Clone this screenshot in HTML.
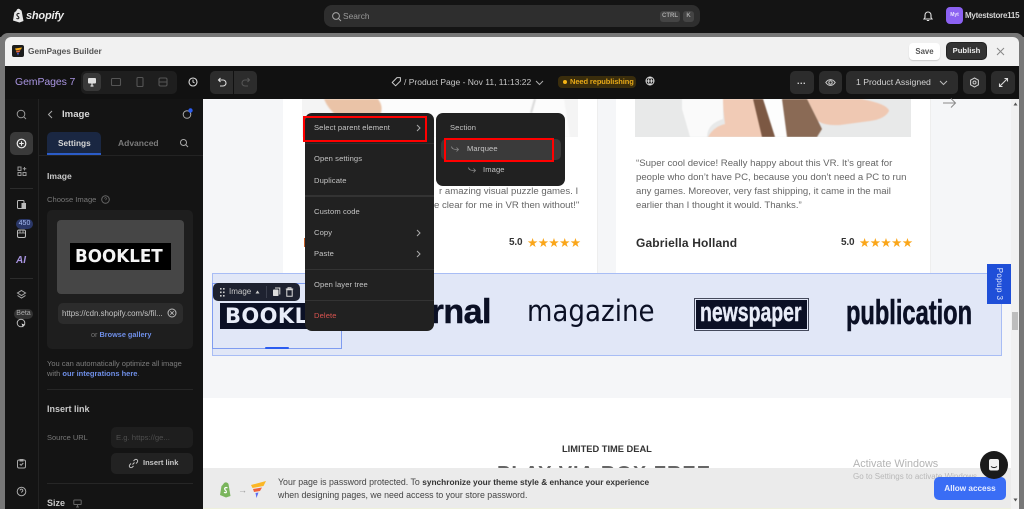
<!DOCTYPE html>
<html><head><meta charset="utf-8"><style>
*{box-sizing:border-box;margin:0;padding:0}
html,body{width:1024px;height:509px;overflow:hidden;background:#141414;font-family:"Liberation Sans",sans-serif}
.a{position:absolute}
.t{position:absolute;white-space:nowrap;line-height:1}
svg{position:absolute;overflow:visible}
.ib{position:absolute;background:#2c2c2c;border-radius:5px}
.m{position:absolute;left:314px;font-size:7.6px;color:#c4c4c4;white-space:nowrap;line-height:1;letter-spacing:.1px}
.q{position:absolute;font-size:9.6px;color:#666;white-space:nowrap;line-height:1}
.s{fill:none;stroke:#9a9a9a;stroke-width:1.1}
</style></head><body>
<div class="a" style="left:0;top:33px;width:1024px;height:476px;background:#777;border-radius:8px 8px 0 0"></div>
<div class="a" style="left:0;top:0;width:1024px;height:33px;background:#141414"></div>

<!-- shopify bar -->
<svg style="left:12px;top:8px" width="12" height="15" viewBox="0 0 12 15"><path d="M1 12.500 2.300 4.600C3 3.600 4 3.600 4.600 2.200 5.400.4 7 .4 8 1.500L9.600 2.800 11.500 13 7.500 14.500Z" fill="#e8e8e8"/><path d="M7.500 5.600C5.600 5 4.400 6.300 5.200 7.600 6 8.700 7.300 8.800 6.800 10.200 6.400 11 5.200 10.800 4.400 10.300" fill="none" stroke="#222" stroke-width="1.100"/></svg>
<div class="t" style="left:26px;top:10.500px;font-size:11px;font-weight:bold;font-style:italic;color:#ececec;letter-spacing:-.2px">shopify</div>
<div class="a" style="left:324px;top:5px;width:376px;height:22px;background:#2e2e2e;border-radius:8px"></div>
<svg style="left:331px;top:11px" width="11" height="11" viewBox="0 0 11 11"><circle cx="5" cy="5" r="3.400" fill="none" stroke="#a8a8a8" stroke-width="1"/><path d="M7.500 7.500 10 10" stroke="#a8a8a8" stroke-width="1"/></svg>
<div class="t" style="left:343px;top:12px;font-size:8.400px;color:#9a9a9a">Search</div>
<div class="a" style="left:660px;top:11px;width:20px;height:11px;background:#444;border-radius:3px;font-size:6px;color:#a8a8a8;text-align:center;line-height:11px;font-weight:bold">CTRL</div>
<div class="a" style="left:683px;top:11px;width:11px;height:11px;background:#444;border-radius:3px;font-size:6px;color:#a8a8a8;text-align:center;line-height:11px;font-weight:bold">K</div>
<svg style="left:922px;top:10px" width="12" height="12" viewBox="0 0 12 12"><path d="M2 9h8L9 7.500V5a3 3 0 0 0-6 0v2.500ZM4.800 10.500h2.400" fill="none" stroke="#e2e2e2" stroke-width="1.100"/></svg>
<div class="a" style="left:946px;top:7px;width:17px;height:17px;background:#8c62f2;border-radius:4px;color:#e9e0ff;font-size:5px;font-weight:bold;text-align:center;line-height:17px">Myt</div>
<div class="t" style="left:965px;top:12px;font-size:8px;color:#d4d4d4;font-weight:bold;letter-spacing:-.25px">Myteststore115</div>

<!-- window header -->
<div class="a" style="left:5px;top:37px;width:1014px;height:472px;background:#f1f1f1;border-radius:6px 6px 0 0"></div>
<div class="a" style="left:12px;top:45px;width:12px;height:12px;background:#1c1c1c;border-radius:2px"></div>
<svg style="left:14px;top:47px" width="9" height="9" viewBox="0 0 9 9"><path d="M1 1.500 8 .5 7 2.500 2 3.500Z" fill="#f7b01e"/><path d="M2 4 6.400 3.200 5.600 5 2.600 5.600Z" fill="#ef6a3a"/><path d="M3 6 5 5.800 4 8.500Z" fill="#5b6bf0"/></svg>
<div class="t" style="left:28px;top:47px;font-size:8.300px;font-weight:bold;color:#555">GemPages Builder</div>
<div class="a" style="left:909px;top:43px;width:31px;height:17px;background:#fff;border-radius:4px;box-shadow:0 1px 1px #ccc;font-size:7.800px;font-weight:bold;color:#555;text-align:center;line-height:17px">Save</div>
<div class="a" style="left:946px;top:42px;width:41px;height:18px;background:#333;border-radius:5px;border:1px solid #222;font-size:7.700px;font-weight:bold;color:#eee;text-align:center;line-height:16px">Publish</div>
<svg style="left:996px;top:47px" width="9" height="9" viewBox="0 0 9 9"><path d="M1 1 8 8M8 1 1 8" stroke="#888" stroke-width="1"/></svg>

<!-- toolbar -->
<div class="a" style="left:5px;top:66px;width:1014px;height:33px;background:#111"></div>
<div class="t" style="left:15px;top:77px;font-size:10.500px;color:#a894e0;letter-spacing:-.1px">GemPages 7</div>
<div class="a" style="left:81px;top:71px;width:96px;height:23px;background:#1e1e1e;border-radius:5px"></div>
<div class="a" style="left:83px;top:73px;width:18px;height:18px;background:#383838;border-radius:4px"></div>
<svg style="left:87px;top:77px" width="10" height="10" viewBox="0 0 10 10"><rect x="1" y="1" width="8" height="5.500" rx="1" fill="#e0e0e0"/><path d="M3.500 9h3M5 6.500V9" stroke="#e0e0e0" stroke-width="1.200"/></svg>
<svg style="left:111px;top:77px" width="10" height="10" viewBox="0 0 10 10"><rect x=".5" y="1.500" width="9" height="7" rx="1" class="s" style="stroke:#555"/></svg>
<svg style="left:135px;top:77px" width="10" height="10" viewBox="0 0 10 10"><rect x="2" y=".5" width="6" height="9" rx="1" class="s" style="stroke:#555"/></svg>
<svg style="left:158px;top:77px" width="10" height="10" viewBox="0 0 10 10"><rect x="1" y="1" width="8" height="8" rx="1.500" class="s" style="stroke:#555"/><path d="M1 5h8" stroke="#555"/></svg>
<svg style="left:188px;top:77px" width="10" height="10" viewBox="0 0 10 10"><circle cx="5" cy="5" r="4" fill="none" stroke="#ddd" stroke-width="1.100"/><path d="M5 2.600V5l1.600 1" fill="none" stroke="#ddd" stroke-width="1"/></svg>
<div class="a" style="left:210px;top:71px;width:23px;height:23px;background:#2c2c2c;border-radius:5px 0 0 5px"></div>
<div class="a" style="left:234px;top:71px;width:23px;height:23px;background:#2c2c2c;border-radius:0 5px 5px 0"></div>
<svg style="left:217px;top:77px" width="10" height="11" viewBox="0 0 10 11"><path d="M3.500 1 1.500 3l2 2M1.500 3H6a2.800 2.800 0 0 1 0 6H3" fill="none" stroke="#ddd" stroke-width="1.100"/></svg>
<svg style="left:241px;top:77px" width="10" height="11" viewBox="0 0 10 11"><path d="M6.500 1 8.500 3l-2 2M8.500 3H4a2.800 2.800 0 0 0 0 6h3" fill="none" stroke="#555" stroke-width="1.100"/></svg>
<svg style="left:391px;top:76px" width="11" height="11" viewBox="0 0 11 11"><path d="M1.200 6.500 6 1.600h3.400V5L4.600 9.800Z" fill="none" stroke="#ccc" stroke-width="1" stroke-linejoin="round"/></svg>
<div class="t" style="left:404px;top:77.500px;font-size:8.500px;color:#c6c6c6">/ Product Page - Nov 11, 11:13:22</div>
<svg style="left:535px;top:80px" width="9" height="6" viewBox="0 0 9 6"><path d="M1 1 4.500 4.500 8 1" fill="none" stroke="#aaa" stroke-width="1"/></svg>
<div class="a" style="left:558px;top:76px;width:78px;height:12px;background:#3a2d0c;border-radius:4px"></div>
<div class="a" style="left:563px;top:80px;width:4px;height:4px;background:#f5b414;border-radius:50%"></div>
<div class="t" style="left:570px;top:78px;font-size:7.500px;color:#e6a817;font-weight:bold;letter-spacing:-.1px">Need republishing</div>
<svg style="left:645px;top:76px" width="10" height="11" viewBox="0 0 10 11"><circle cx="5" cy="5" r="4" fill="none" stroke="#ddd" stroke-width="1"/><path d="M1 5h8M5 1c-2 2-2 6 0 8M5 1c2 2 2 6 0 8" fill="none" stroke="#ddd" stroke-width=".9"/></svg>
<div class="ib" style="left:790px;top:71px;width:24px;height:23px"></div>
<div class="t" style="left:797px;top:78px;font-size:9px;color:#ddd;letter-spacing:.5px;font-weight:bold;line-height:6px">...</div>
<div class="ib" style="left:819px;top:71px;width:23px;height:23px"></div>
<svg style="left:825px;top:77px" width="11" height="11" viewBox="0 0 11 11"><path d="M.8 5.500C3.500 1.600 7.500 1.600 10.200 5.500 7.500 9.400 3.500 9.400.8 5.500Z" fill="none" stroke="#ccc"/><circle cx="5.500" cy="5.500" r="1.700" fill="none" stroke="#ccc"/></svg>
<div class="ib" style="left:846px;top:71px;width:112px;height:23px"></div>
<div class="t" style="left:856px;top:78px;font-size:8.700px;color:#d2d2d2">1 Product Assigned</div>
<svg style="left:939px;top:80px" width="9" height="6" viewBox="0 0 9 6"><path d="M1 1 4.500 4.500 8 1" fill="none" stroke="#bbb" stroke-width="1"/></svg>
<div class="ib" style="left:963px;top:71px;width:23px;height:23px"></div>
<svg style="left:969px;top:77px" width="11" height="11" viewBox="0 0 11 11"><path d="M5.500 1 9.400 3.200V7.800L5.500 10 1.600 7.800V3.200Z" fill="none" stroke="#ccc" stroke-width="1.100"/><circle cx="5.500" cy="5.500" r="1.500" fill="none" stroke="#ccc"/></svg>
<div class="ib" style="left:991px;top:71px;width:24px;height:23px"></div>
<svg style="left:998px;top:77px" width="11" height="11" viewBox="0 0 11 11"><path d="M1.500 9.500 9.500 1.500M6.500 1.500h3v3M1.500 6.500v3h3" fill="none" stroke="#ddd" stroke-width="1.100"/></svg>

<!-- left rail + panel -->
<div class="a" style="left:5px;top:99px;width:198px;height:410px;background:#141414"></div>
<div class="a" style="left:38px;top:99px;width:1px;height:410px;background:#232323"></div>
<svg style="left:16px;top:109px" width="11" height="11" viewBox="0 0 11 11"><circle cx="5" cy="5" r="3.800" fill="none" stroke="#999"/><path d="M7.800 7.800 10 10" stroke="#999"/></svg>
<div class="a" style="left:10px;top:132px;width:23px;height:23px;background:#3a3a3a;border-radius:5px"></div>
<svg style="left:16px;top:138px" width="11" height="11" viewBox="0 0 11 11"><circle cx="5.500" cy="5.500" r="4.300" fill="none" stroke="#eee" stroke-width="1.200"/><path d="M5.500 3.200v4.600M3.200 5.500h4.600" stroke="#eee" stroke-width="1.100"/></svg>
<svg style="left:17px;top:166px" width="10" height="11" viewBox="0 0 10 11"><g fill="none" stroke="#999"><rect x="1" y="1" width="3" height="3.500"/><rect x="1" y="6.500" width="3" height="3"/><rect x="6" y="6.500" width="3" height="3"/><path d="M7.500 1v3.500M5.800 2.800h3.500"/></g></svg>
<div class="a" style="left:10px;top:188px;width:23px;height:1px;background:#2c2c2c"></div>
<svg style="left:16px;top:199px" width="11" height="11" viewBox="0 0 11 11"><g fill="none" stroke="#bbb"><rect x="1.500" y="1.500" width="6.500" height="8" rx="1"/><rect x="6" y="4.500" width="3.500" height="5" fill="#bbb"/></g></svg>
<div class="a" style="left:16px;top:219px;width:17px;height:10px;background:#2a3767;border-radius:5px;color:#a8bdf5;font-size:7px;text-align:center;line-height:10px">450</div>
<svg style="left:16px;top:228px" width="11" height="11" viewBox="0 0 11 11"><rect x="1.500" y="2" width="8" height="7.500" rx="1.500" fill="none" stroke="#bbb"/><path d="M1.500 5h8M4 2v3M7 2v3" stroke="#bbb" stroke-width=".8"/></svg>
<div class="t" style="left:16px;top:256px;font-size:10px;font-weight:bold;color:#a894e0;font-style:italic">AI</div>
<div class="a" style="left:10px;top:278px;width:23px;height:1px;background:#2c2c2c"></div>
<svg style="left:16px;top:289px" width="11" height="11" viewBox="0 0 11 11"><path d="M5.500 1.500 9.500 4 5.500 6.500 1.500 4ZM1.500 6.500l4 2.500 4-2.500" fill="none" stroke="#aaa"/></svg>
<div class="a" style="left:14px;top:309px;width:19px;height:10px;background:#333;border-radius:5px;color:#aaa;font-size:7px;text-align:center;line-height:10px">Beta</div>
<svg style="left:16px;top:318px" width="11" height="11" viewBox="0 0 11 11"><circle cx="5" cy="5" r="3.800" fill="none" stroke="#bbb"/><path d="M5.500 5.500 9.500 7 7.500 7.500 7 9.500Z" fill="#ddd"/></svg>
<svg style="left:16px;top:458px" width="11" height="11" viewBox="0 0 11 11"><rect x="1.500" y="2" width="8" height="8" rx="1.500" fill="none" stroke="#aaa"/><path d="M4 1.500h3V3H4ZM3.800 6l1.300 1.300L7.300 5" fill="none" stroke="#aaa"/></svg>
<svg style="left:16px;top:486px" width="11" height="11" viewBox="0 0 11 11"><circle cx="5.500" cy="5.500" r="4.300" fill="none" stroke="#aaa"/><path d="M4.200 4.400a1.300 1.300 0 1 1 1.900 1.200c-.4.300-.6.500-.6 1" fill="none" stroke="#aaa"/></svg>

<svg style="left:47px;top:110px" width="6" height="9" viewBox="0 0 6 9"><path d="M5 1 1.500 4.500 5 8" fill="none" stroke="#aaa"/></svg>
<div class="t" style="left:62px;top:109.500px;font-size:9.600px;font-weight:bold;color:#d8d8d8">Image</div>
<svg style="left:182px;top:108px" width="11" height="12" viewBox="0 0 11 12"><circle cx="5" cy="6.500" r="3.800" fill="none" stroke="#aaa"/><circle cx="8.500" cy="2.500" r="2.200" fill="#2b5cf0"/></svg>
<div class="a" style="left:47px;top:132px;width:54px;height:23px;background:#1a2742;border-radius:5px 5px 0 0;border-bottom:2px solid #2b5cc8"></div>
<div class="t" style="left:58px;top:139px;font-size:8.300px;font-weight:bold;color:#d8d8d8">Settings</div>
<div class="t" style="left:118px;top:139px;font-size:8.500px;font-weight:bold;color:#7b7b7b">Advanced</div>
<svg style="left:179px;top:138px" width="10" height="10" viewBox="0 0 10 10"><circle cx="4.500" cy="4.500" r="3" fill="none" stroke="#aaa"/><path d="M6.800 6.800 9 9" stroke="#aaa"/></svg>
<div class="a" style="left:39px;top:155px;width:164px;height:1px;background:#232323"></div>
<div class="t" style="left:47px;top:171.500px;font-size:8.600px;font-weight:bold;color:#c8c8c8">Image</div>
<div class="t" style="left:47px;top:196px;font-size:7.600px;color:#777">Choose Image</div>
<svg style="left:101px;top:195px" width="9" height="9" viewBox="0 0 9 9"><circle cx="4.500" cy="4.500" r="3.800" fill="none" stroke="#666"/><path d="M3.500 3.600a1 1 0 1 1 1.500.9c-.3.200-.5.400-.5.800" fill="none" stroke="#666" stroke-width=".7"/></svg>
<div class="a" style="left:47px;top:210px;width:146px;height:139px;background:#1e1e1e;border-radius:5px"></div>
<div class="a" style="left:57px;top:220px;width:127px;height:74px;background:#464646;border-radius:4px"></div>
<div class="a" style="left:70px;top:243px;width:101px;height:27px;background:#000"></div>
<div class="t" style="left:75px;top:247.500px;font-size:18px;font-weight:bold;color:#f4f4f4;font-family:'DejaVu Sans',sans-serif;transform:scaleX(.93);transform-origin:left">BOOKLET</div>
<div class="a" style="left:58px;top:303px;width:125px;height:21px;background:#2c2c2c;border-radius:5px"></div>
<div class="t" style="left:62px;top:309.500px;font-size:7.900px;color:#c4c4c4">https://cdn.shopify.com/s/fil...</div>
<svg style="left:167px;top:308px" width="10" height="10" viewBox="0 0 10 10"><circle cx="5" cy="5" r="4" fill="none" stroke="#bbb"/><path d="M3.300 3.300l3.400 3.400M6.700 3.300 3.300 6.700" stroke="#bbb" stroke-width=".8"/></svg>
<div class="t" style="left:91px;top:330.500px;font-size:7.300px;color:#777">or <span style="color:#6f8fe8;font-weight:bold">Browse gallery</span></div>
<div class="t" style="left:47px;top:359.500px;font-size:7.500px;color:#7d7d7d">You can automatically optimize all image</div>
<div class="t" style="left:47px;top:369.500px;font-size:7.500px;color:#7d7d7d">with <span style="color:#6f8fe8;font-weight:bold">our integrations here</span>.</div>
<div class="a" style="left:47px;top:389px;width:146px;height:1px;background:#262626"></div>
<div class="t" style="left:47px;top:405px;font-size:9px;font-weight:bold;color:#c8c8c8">Insert link</div>
<div class="t" style="left:47px;top:434px;font-size:7.500px;color:#777">Source URL</div>
<div class="a" style="left:111px;top:427px;width:82px;height:21px;background:#1e1e1e;border-radius:5px"></div>
<div class="t" style="left:116px;top:434px;font-size:7.700px;color:#4e4e4e">E.g. https://ge...</div>
<div class="a" style="left:111px;top:453px;width:82px;height:21px;background:#222;border-radius:5px"></div>
<svg style="left:128px;top:458px" width="11" height="11" viewBox="0 0 11 11"><path d="M4.500 6.500 6.500 4.500M5.500 3l1.200-1.200a1.700 1.700 0 0 1 2.500 2.500L8 5.500M3 5.500 1.800 6.700a1.700 1.700 0 0 0 2.500 2.500L5.500 8" fill="none" stroke="#ccc" stroke-width=".9"/></svg>
<div class="t" style="left:143px;top:459px;font-size:7.500px;font-weight:bold;color:#c8c8c8">Insert link</div>
<div class="a" style="left:47px;top:483px;width:146px;height:1px;background:#262626"></div>
<div class="t" style="left:47px;top:498.500px;font-size:9px;font-weight:bold;color:#c8c8c8">Size</div>
<svg style="left:73px;top:499px" width="9" height="9" viewBox="0 0 9 9"><rect x=".8" y="1" width="7.400" height="4.500" rx=".8" fill="none" stroke="#666"/><path d="M3 8h3M4.500 5.500V8" stroke="#666"/></svg>

<!-- canvas -->
<div class="a" style="left:203px;top:99px;width:808px;height:410px;background:#f5f6f8"></div>
<div class="a" style="left:283px;top:99px;width:315px;height:174px;background:#fff;border-right:1px solid #eee"></div>
<div class="a" style="left:616px;top:99px;width:315px;height:174px;background:#fff;border-right:1px solid #eee"></div>
<div class="a" style="left:203px;top:398px;width:808px;height:111px;background:#fff"></div>

<!-- photos -->
<div class="a" style="left:302px;top:99px;width:276px;height:38px;background:#f4f4f4;overflow:hidden">
<svg style="left:0;top:0" width="276" height="38" viewBox="0 0 276 38"><g style="filter:blur(.8px)"><path d="M76 0H262L268 38H76Z" fill="#fcfcfc"/><path d="M22 0H76Q82 8 78 16 L36 18 Q26 10 22 0Z" fill="#eac3a7"/><path d="M233 0 229 14" stroke="#d8d8d8" stroke-width="2"/></g></svg>
</div>
<div class="a" style="left:635px;top:99px;width:276px;height:38px;background:#e8e9e9;overflow:hidden">
<svg style="left:0;top:0" width="276" height="38" viewBox="0 0 276 38"><g style="filter:blur(.6px)">
<path d="M47 0 88 0 88 20Q72 25 72 38L55 38Q50 20 47 10Z" fill="#fafafa"/>
<path d="M172 0 226 0Q253 5 254 12 250 20 235 22L205 26Q190 27 183 22Z" fill="#efc8b2"/>
<path d="M88 0 118 0 128 38 73 38Q78 28 90 25 88 10 88 0Z" fill="#f1cbb6"/>
<path d="M128 0 148 0 158 38 140 38Z" fill="#fdfdfd"/>
<path d="M118 0 128 0 140 38 127 38Z" fill="#7c5843"/>
<path d="M147 0 172 0 187 30 182 38 152 38Z" fill="#8a6a55"/>
</g></svg>
</div>
<svg style="left:943px;top:97px" width="14" height="12" viewBox="0 0 14 12"><path d="M0 6h12.500M8 1.500 12.500 6 8 10.500" fill="none" stroke="#8a8a8a" stroke-width="1"/></svg>

<!-- left card text -->
<div class="q" style="left:439px;top:187px">r amazing visual puzzle games. I</div>
<div class="q" style="left:434px;top:200.500px">e clear for me in VR then without!"</div>
<div class="a" style="left:304px;top:238px;width:1.500px;height:9px;background:#c9632c"></div>
<div class="t" style="left:509px;top:238px;font-size:10px;font-weight:bold;color:#333;letter-spacing:-.2px">5.0</div>
<div class="t" style="left:527px;top:237px;font-size:12.500px;color:#faa61a;letter-spacing:-.5px;font-family:'DejaVu Sans',sans-serif">★★★★★</div>

<!-- right card text -->
<div class="q" style="left:636px;top:158.500px">“Super cool device! Really happy about this VR. It’s great for</div>
<div class="q" style="left:636px;top:172.500px">people who don’t have PC, because you don’t need a PC to run</div>
<div class="q" style="left:636px;top:186.500px">any games. Moreover, very fast shipping, it came in the mail</div>
<div class="q" style="left:636px;top:200.500px">earlier than I thought it would. Thanks.”</div>
<div class="t" style="left:636px;top:237px;font-size:12px;font-weight:bold;color:#2e2e2e;letter-spacing:.15px">Gabriella Holland</div>
<div class="t" style="left:841px;top:238px;font-size:10px;font-weight:bold;color:#333;letter-spacing:-.2px">5.0</div>
<div class="t" style="left:859px;top:237px;font-size:12.500px;color:#faa61a;letter-spacing:-.5px;font-family:'DejaVu Sans',sans-serif">★★★★★</div>

<!-- banner -->
<div class="a" style="left:212px;top:273px;width:790px;height:83px;background:#e1e7f7;border:1px solid #a8bdf5"></div>
<div class="a" style="left:212px;top:283px;width:130px;height:66px;border:1px solid #7f9cf0"></div>
<div class="a" style="left:265px;top:347px;width:24px;height:2px;background:#2b5cf0;border-radius:1px"></div>
<div class="a" style="left:220px;top:303px;width:95px;height:26px;background:#0b1025"></div>
<div class="t" style="left:225px;top:306px;font-size:21px;font-weight:bold;color:#e8ecf8;font-family:'DejaVu Sans',sans-serif;letter-spacing:.4px">BOOKLET</div>
<div class="t" style="right:533px;top:295px;font-size:34px;font-weight:bold;color:#0b1025;letter-spacing:-.5px;-webkit-text-stroke:.5px #0b1025">journal</div>
<div class="t" style="left:527px;top:297px;font-size:29.500px;color:#0b1025;font-family:'DejaVu Sans',sans-serif;transform:scaleX(.885);transform-origin:left">magazine</div>
<div class="a" style="left:694px;top:298px;width:115px;height:33px;border:1px solid #44495c;padding:1px"><div style="width:100%;height:100%;background:#0b1025"></div></div>
<div class="t" style="left:700px;top:299px;font-size:27px;font-weight:bold;color:#e8ecf8;transform:scaleX(.72);transform-origin:left;-webkit-text-stroke:.4px #e8ecf8">newspaper</div>
<div class="t" style="left:846px;top:296px;font-size:34px;font-weight:bold;color:#0b1025;transform:scaleX(.695);transform-origin:left;-webkit-text-stroke:.6px #0b1025">publication</div>
<div class="a" style="left:987px;top:264px;width:24px;height:40px;background:#1f4fd8"></div>
<div class="t" style="left:999px;top:284px;font-size:8px;color:#dfe6fb;transform:translate(-50%,-50%) rotate(90deg);letter-spacing:.4px">Popup 3</div>

<!-- image toolbar -->
<div class="a" style="left:213px;top:283px;width:87px;height:18px;background:#1e2230;border-radius:5px"></div>
<svg style="left:219px;top:288px" width="7" height="9" viewBox="0 0 7 9"><g fill="#ccc"><rect width="1.600" height="1.600" x="1"/><rect width="1.600" height="1.600" x="4"/><rect width="1.600" height="1.600" x="1" y="3.500"/><rect width="1.600" height="1.600" x="4" y="3.500"/><rect width="1.600" height="1.600" x="1" y="7"/><rect width="1.600" height="1.600" x="4" y="7"/></g></svg>
<div class="t" style="left:229px;top:288px;font-size:8px;color:#c8c8c8">Image</div>
<svg style="left:255px;top:290px" width="5" height="4" viewBox="0 0 5 4"><path d="M.5 3.500 2.500.5l2 3Z" fill="#ccc"/></svg>
<div class="a" style="left:266px;top:286px;width:1px;height:12px;background:#3a3e4c"></div>
<svg style="left:272px;top:287px" width="9" height="10" viewBox="0 0 9 10"><rect x="1" y="2.500" width="5.500" height="6.500" rx=".8" fill="#ddd"/><path d="M3 1h4.800v6.500" fill="none" stroke="#ddd"/></svg>
<svg style="left:285px;top:287px" width="9" height="10" viewBox="0 0 9 10"><path d="M.8 2h7.400M3 2V.8h3V2M1.800 2.800h5.400V9.300H1.800Z" fill="none" stroke="#ddd"/></svg>

<!-- context menu -->
<div class="a" style="left:305px;top:113px;width:129px;height:218px;background:#212121;border-radius:7px"></div>
<div class="a" style="left:303px;top:116px;width:124px;height:26px;border:2.500px solid #f00"></div>
<div class="m" style="top:124.200px">Select parent element</div>
<svg style="left:416px;top:124px" width="5" height="8" viewBox="0 0 5 8"><path d="M1 1l3 3-3 3" fill="none" stroke="#aaa"/></svg>
<div class="a" style="left:305px;top:143px;width:129px;height:1px;background:#2e2e2e"></div>
<div class="m" style="top:155px">Open settings</div>
<div class="m" style="top:176.500px">Duplicate</div>
<div class="a" style="left:305px;top:195px;width:129px;height:1.500px;background:#333"></div>
<div class="m" style="top:207.500px">Custom code</div>
<div class="m" style="top:229px">Copy</div>
<svg style="left:416px;top:229px" width="5" height="8" viewBox="0 0 5 8"><path d="M1 1l3 3-3 3" fill="none" stroke="#aaa"/></svg>
<div class="m" style="top:249.500px">Paste</div>
<svg style="left:416px;top:250px" width="5" height="8" viewBox="0 0 5 8"><path d="M1 1l3 3-3 3" fill="none" stroke="#aaa"/></svg>
<div class="a" style="left:305px;top:269px;width:129px;height:1px;background:#333"></div>
<div class="m" style="top:281px">Open layer tree</div>
<div class="a" style="left:305px;top:300px;width:129px;height:1px;background:#333"></div>
<div class="m" style="top:312px;color:#d9534f">Delete</div>

<!-- submenu -->
<div class="a" style="left:436px;top:113px;width:129px;height:73px;background:#212121;border-radius:7px"></div>
<div class="a" style="left:441px;top:139px;width:120px;height:21px;background:#3a3a3a;border-radius:5px"></div>
<div class="a" style="left:444px;top:138px;width:110px;height:24px;border:2.500px solid #f00"></div>
<div class="m" style="left:450px;top:124px">Section</div>
<svg style="left:451px;top:146px" width="9" height="7" viewBox="0 0 9 7"><path d="M.5.500C1 3 2.500 3.500 7.500 3.500M5.500 1.500l2 2-2 2" fill="none" stroke="#888" stroke-width=".8"/></svg>
<div class="m" style="left:467px;top:145px">Marquee</div>
<svg style="left:468px;top:167px" width="9" height="7" viewBox="0 0 9 7"><path d="M.5.500C1 3 2.500 3.500 7.500 3.500M5.500 1.500l2 2-2 2" fill="none" stroke="#888" stroke-width=".8"/></svg>
<div class="m" style="left:483px;top:166px">Image</div>

<!-- lower -->
<div class="t" style="left:562px;top:445px;font-size:9.300px;font-weight:bold;color:#333">LIMITED TIME DEAL</div>
<div class="t" style="left:497px;top:464px;font-size:20px;font-weight:bold;color:#666;letter-spacing:1px">PLAY VIA BOX FREE</div>

<!-- password bar -->
<div class="a" style="left:203px;top:468px;width:808px;height:41px;background:#ebebeb"></div>
<div class="a" style="left:203px;top:507.500px;width:808px;height:1.500px;background:#eef0dc"></div>
<svg style="left:218px;top:481px" width="15" height="17" viewBox="0 0 15 17"><path d="M2 14 3.500 5C5 4 5.500 2 7 1.500c1.500-.5 3 .5 3.500 1.500L12.500 15 8 16.500Z" fill="#7ab55c"/><path d="M9.500 6.800C7.500 6 6 7.200 7 8.700c.8 1 1.800 1.200 1.400 2.500-.4.800-1.600.6-2.400.1" fill="none" stroke="#fff" stroke-width="1.200"/></svg>
<div class="t" style="left:238px;top:486px;font-size:9px;color:#999">→</div>
<svg style="left:250px;top:480px" width="17" height="19" viewBox="0 0 17 19"><path d="M1 5 16 1 13.500 6 2.500 8Z" fill="#fbb726"/><path d="M3 9 12 7.500 10 11 4 12Z" fill="#f0613a"/><path d="M5.500 13 8.500 12.500 6.500 18Z" fill="#5b6bf0"/></svg>
<div class="t" style="left:278px;top:477.500px;font-size:8.800px;color:#444">Your page is password protected. To <b style="color:#333;font-size:8.300px">synchronize your theme style &amp; enhance your experience</b></div>
<div class="t" style="left:278px;top:490.500px;font-size:8.800px;color:#444">when designing pages, we need access to your store password.</div>
<div class="t" style="left:853px;top:459px;font-size:10.800px;color:#b4b4b4">Activate Windows</div>
<div class="t" style="left:853px;top:473px;font-size:8px;color:#b8b8b8">Go to Settings to activate Windows.</div>
<div class="a" style="left:934px;top:477px;width:72px;height:23px;background:#3a6df5;border-radius:5px;color:#e8eeff;font-size:8.200px;font-weight:bold;text-align:center;line-height:23px">Allow access</div>
<div class="a" style="left:980px;top:451px;width:28px;height:28px;background:#1a1a1a;border-radius:50%"></div>
<svg style="left:988px;top:458px" width="12" height="14" viewBox="0 0 12 14"><rect x="1" y="1" width="10" height="11.500" rx="2" fill="#f2f2f2"/><path d="M3 8.500c2 1.500 4 1.500 6 0" fill="none" stroke="#1a1a1a"/></svg>

<!-- scrollbar -->
<div class="a" style="left:1011px;top:99px;width:8px;height:410px;background:#f1f1f1"></div>
<div class="a" style="left:1012px;top:312px;width:6px;height:18px;background:#bdbdbd"></div>
<svg style="left:1013px;top:102px" width="5" height="4" viewBox="0 0 5 4"><path d="M.5 3.500 2.500.5l2 3Z" fill="#555"/></svg>
<svg style="left:1013px;top:498px" width="5" height="4" viewBox="0 0 5 4"><path d="M.5.500 2.500 3.500l2-3Z" fill="#555"/></svg>
<div class="a" style="left:1019px;top:37px;width:5px;height:472px;background:#777"></div>
<div class="a" style="left:0;top:37px;width:5px;height:472px;background:#777"></div>
</body></html>
